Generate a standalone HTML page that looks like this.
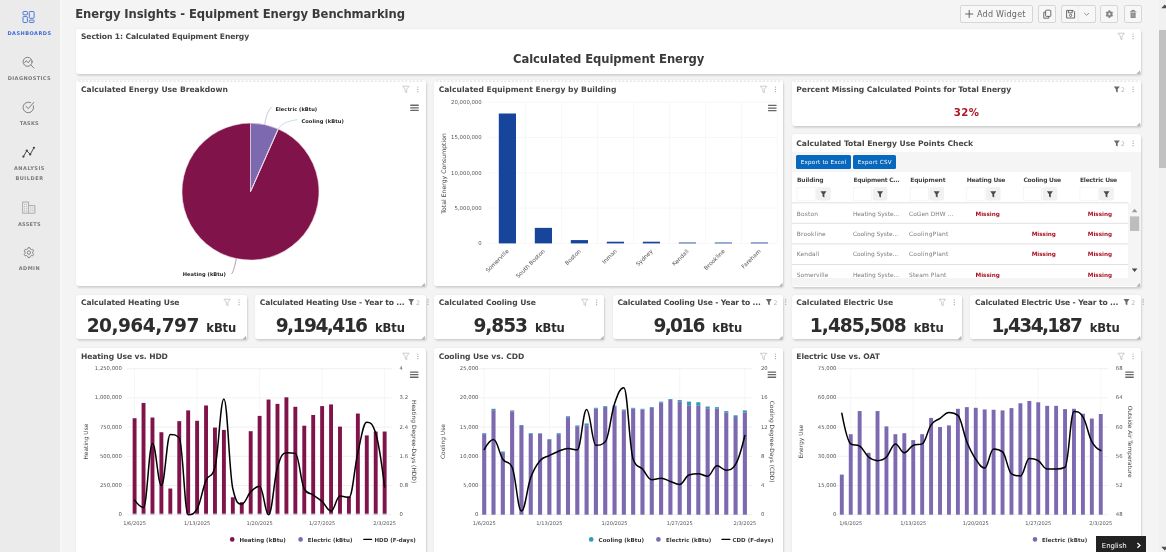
<!DOCTYPE html>
<html lang="en"><head><meta charset="utf-8"><title>Energy Insights - Equipment Energy Benchmarking</title>
<style>
html,body{margin:0;padding:0}
body{width:1166px;height:552px;overflow:hidden;position:relative;background:#f4f4f4;font-family:"DejaVu Sans","Liberation Sans",sans-serif;}
.t{position:absolute;white-space:nowrap;display:block}
.a,div{position:absolute;box-sizing:border-box}
.card{background:#fff;border-radius:3px;box-shadow:1px 2px 2px rgba(0,0,0,.13),0 0 2.5px rgba(0,0,0,.07)}
.btn{border:1px solid #d6d6d6;border-radius:2px;background:#f7f7f7}
svg{overflow:visible}
#root{left:0;top:0;width:1166px;height:552px;will-change:transform;filter:blur(.3px)}
</style></head><body><div id="root">
<div class="" style="left:0.00px;top:0.00px;width:60.00px;height:552.00px;background:#ebebeb;"></div>
<div class="" style="left:60.00px;top:0.00px;width:2.00px;height:552.00px;background:#f7f7f7;"></div>
<div class="" style="left:1158.60px;top:0.00px;width:7.40px;height:552.00px;background:#f1f1f1;"></div>
<div class="" style="left:1158.60px;top:30.00px;width:7.40px;height:138.00px;background:#c1c1c1;"></div>
<svg class="a" style="left:0px;top:0px" width="1166" height="552" viewBox="0 0 1166 552">
<path d="M1161.2 8.2L1164.8 4.4L1168.4 8.2Z" fill="#505050"/>
<path d="M1161.2 546.8L1164.8 550.4L1168.4 546.8Z" fill="#505050"/>
</svg>
<span class="t" style="left:7.40px;top:31.00px;font-size:5.0px;line-height:5.0px;color:#3b6bd6;font-weight:700;letter-spacing:0.488px;">DASHBOARDS</span>
<span class="t" style="left:7.75px;top:76.00px;font-size:5.0px;line-height:5.0px;color:#7a7a7a;font-weight:700;letter-spacing:0.424px;">DIAGNOSTICS</span>
<span class="t" style="left:19.70px;top:121.00px;font-size:5.0px;line-height:5.0px;color:#7a7a7a;font-weight:700;letter-spacing:0.258px;">TASKS</span>
<span class="t" style="left:14.00px;top:166.00px;font-size:5.0px;line-height:5.0px;color:#7a7a7a;font-weight:700;letter-spacing:0.484px;">ANALYSIS</span>
<span class="t" style="left:15.40px;top:176.00px;font-size:5.0px;line-height:5.0px;color:#7a7a7a;font-weight:700;letter-spacing:0.544px;">BUILDER</span>
<span class="t" style="left:17.90px;top:222.00px;font-size:5.0px;line-height:5.0px;color:#7a7a7a;font-weight:700;letter-spacing:0.265px;">ASSETS</span>
<span class="t" style="left:18.80px;top:266.00px;font-size:5.0px;line-height:5.0px;color:#7a7a7a;font-weight:700;letter-spacing:0.440px;">ADMIN</span>
<svg class="a" style="left:0px;top:0px" width="60" height="300" viewBox="0 0 60 300">
<g fill="none" stroke="#4673d6" stroke-width="0.95"><rect x="23.0" y="11.5" width="4.4" height="3.3" rx="0.8"/><rect x="29.3" y="11.5" width="4.8" height="6.8" rx="0.8"/><rect x="23.0" y="16.6" width="4.4" height="5.9" rx="0.8"/><rect x="29.3" y="20.1" width="4.8" height="2.4" rx="0.8"/></g>
<g fill="none" stroke="#7a7a7a" stroke-width="0.95" stroke-linecap="round" stroke-linejoin="round"><circle cx="27.6" cy="61.8" r="4.5"/><path d="M31.0 65.2L34.0 68.0"/><path d="M24.6 62.6L26.4 60.6L28.2 62.8L30.4 60.0"/></g>
<g fill="none" stroke="#7a7a7a" stroke-width="0.95" stroke-linecap="round" stroke-linejoin="round"><path d="M33.4 105.8A5.3 5.3 0 1 1 30.6 102.6"/><path d="M26.0 106.4L28.3 108.6L33.8 102.4"/></g>
<g fill="none" stroke="#444" stroke-width="0.95" stroke-linecap="round" stroke-linejoin="round"><path d="M23.4 156.6L26.8 150.6L30.2 154.4L33.9 147.8"/></g><g fill="#444"><circle cx="23.4" cy="156.6" r="1.15"/><circle cx="26.8" cy="150.6" r="1.15"/><circle cx="30.2" cy="154.4" r="1.15"/><circle cx="33.9" cy="147.8" r="1.15"/></g>
<g fill="none" stroke="#9a9a9a" stroke-width="0.8" stroke-linejoin="round"><path d="M22.6 213.2V202.0H28.6V213.2Z"/><path d="M28.6 205.6H34.9V213.2H28.6"/><path d="M24.2 204.4h0.9M26.2 204.4h0.9M24.2 206.6h0.9M26.2 206.6h0.9M24.2 208.8h0.9M26.2 208.8h0.9M24.2 211h0.9M26.2 211h0.9M30.4 208h0.9M32.4 208h0.9M30.4 210.4h0.9M32.4 210.4h0.9"/></g>
<path d="M28.01 247.68L29.79 247.68L30.22 248.93L31.42 249.62L32.72 249.37L33.60 250.91L32.74 251.91L32.74 253.29L33.60 254.29L32.72 255.83L31.42 255.58L30.22 256.27L29.79 257.52L28.01 257.52L27.58 256.27L26.38 255.58L25.08 255.83L24.20 254.29L25.06 253.29L25.06 251.91L24.20 250.91L25.08 249.37L26.38 249.62L27.58 248.93Z" fill="none" stroke="#7a7a7a" stroke-width="0.9" stroke-linejoin="round"/>
<circle cx="28.9" cy="252.6" r="1.7" fill="none" stroke="#7a7a7a" stroke-width="0.9"/>
</svg>
<span class="t" style="left:75.20px;top:9.00px;font-size:11.6px;line-height:11.6px;color:#3a3a3a;font-weight:700;letter-spacing:-0.071px;">Energy Insights - Equipment Energy Benchmarking</span>
<div class="btn" style="left:960.00px;top:5.00px;width:72.60px;height:18.00px;"></div>
<div class="btn" style="left:1038.30px;top:5.00px;width:17.70px;height:18.00px;"></div>
<div class="btn" style="left:1061.00px;top:5.00px;width:34.50px;height:18.00px;"></div>
<div class="btn" style="left:1100.20px;top:5.00px;width:18.20px;height:18.00px;"></div>
<div class="btn" style="left:1124.00px;top:5.00px;width:17.60px;height:18.00px;"></div>
<span class="t" style="left:977.00px;top:11.00px;font-size:8.0px;line-height:8.0px;color:#666;letter-spacing:0.255px;">Add Widget</span>
<svg class="a" style="left:950px;top:0px" width="200" height="28" viewBox="950 0 200 28">
<path d="M965.2 14H973.2M969.2 10V18" stroke="#555" stroke-width="0.9" fill="none"/>
<g fill="none" stroke="#555" stroke-width="0.85" stroke-linejoin="round"><rect x="1045.6" y="10.2" width="5.2" height="6.2" rx="0.7"/><path d="M1045.6 12.2H1043.8V18.2H1048.8V16.4"/></g>
<g fill="none" stroke="#555" stroke-width="0.85" stroke-linejoin="round"><path d="M1066.6 10.4H1073.0L1074.6 12.0V18.0H1066.6Z"/><path d="M1068.4 10.4V12.8H1072.2V10.4"/><circle cx="1070.6" cy="15.4" r="1.1"/></g>
<path d="M1084.2 13.1L1086.6 15.2L1089.0 13.1" fill="none" stroke="#8a8a8a" stroke-width="0.9"/>
<path d="M1078.2 6.5V21.5" stroke="#e6e6e6" stroke-width="0.6"/>
<path d="M1108.76 10.56L1110.04 10.56L1110.35 11.47L1111.21 11.96L1112.15 11.78L1112.79 12.88L1112.16 13.60L1112.16 14.60L1112.79 15.32L1112.15 16.42L1111.21 16.24L1110.35 16.73L1110.04 17.64L1108.76 17.64L1108.45 16.73L1107.59 16.24L1106.65 16.42L1106.01 15.32L1106.64 14.60L1106.64 13.60L1106.01 12.88L1106.65 11.78L1107.59 11.96L1108.45 11.47Z" fill="#858585" stroke="#777" stroke-width="0.4" stroke-linejoin="round"/>
<circle cx="1109.4" cy="14.1" r="1.35" fill="#f7f7f7" stroke="#777" stroke-width="0.4"/>
<g stroke="#6d6d6d" stroke-width="0.8" fill="none"><path d="M1129.9 11.8H1136.3"/><path d="M1131.8 11.6V10.4H1134.4V11.6"/></g><rect x="1130.6" y="12.7" width="5.0" height="5.3" rx="0.5" fill="#858585"/><path d="M1132.3 13.4V17.3M1133.9 13.4V17.3" stroke="#c8c8c8" stroke-width="0.5"/>
</svg>
<div class="card" style="left:76.30px;top:28.50px;width:1064.50px;height:45.40px;"></div>
<span class="t" style="left:81.00px;top:33.00px;font-size:7.6px;line-height:7.6px;color:#454545;font-weight:700;letter-spacing:-0.106px;">Section 1: Calculated Equipment Energy</span>
<svg class="a" style="left:0px;top:0px" width="1166" height="552" viewBox="0 0 1166 552">
<path d="M1118.00 33.20H1124.40L1122.00 36.20V39.70L1120.40 38.80V36.20Z" fill="none" stroke="#b9b9b9" stroke-width="0.7" stroke-linejoin="round"/>
<circle cx="1133.10" cy="34.10" r="0.65" fill="#a8a8a8"/>
<circle cx="1133.10" cy="36.40" r="0.65" fill="#a8a8a8"/>
<circle cx="1133.10" cy="38.70" r="0.65" fill="#a8a8a8"/>
<path d="M1140.10 70.20V74.00H1136.50Z" fill="#b4b4b4"/>
</svg>
<span class="t" style="left:512.95px;top:54.00px;font-size:11.6px;line-height:11.6px;color:#3a3a3a;font-weight:700;letter-spacing:-0.066px;">Calculated Equipment Energy</span>
<div class="card" style="left:76.30px;top:80.30px;width:349.23px;height:206.20px;"></div>
<span class="t" style="left:81.00px;top:86.00px;font-size:7.6px;line-height:7.6px;color:#454545;font-weight:700;letter-spacing:0.005px;">Calculated Energy Use Breakdown</span>
<svg class="a" style="left:0px;top:0px" width="1166" height="552" viewBox="0 0 1166 552">
<path d="M78.30 81.10H423.53" stroke="#cfcfcf" stroke-width="0.8" stroke-dasharray="2.2 1.6"/>
<path d="M402.73 86.20H409.13L406.73 89.20V92.70L405.13 91.80V89.20Z" fill="none" stroke="#b9b9b9" stroke-width="0.7" stroke-linejoin="round"/>
<circle cx="417.83" cy="87.10" r="0.65" fill="#a8a8a8"/>
<circle cx="417.83" cy="89.40" r="0.65" fill="#a8a8a8"/>
<circle cx="417.83" cy="91.70" r="0.65" fill="#a8a8a8"/>
<path d="M424.83 282.80V286.60H421.23Z" fill="#b4b4b4"/>
</svg>
<svg class="a" style="left:0px;top:0px" width="1166" height="552" viewBox="0 0 1166 552">
<rect x="410.20" y="104.60" width="8.6" height="1.3" rx="0.5" fill="#666"/>
<rect x="410.20" y="107.20" width="8.6" height="1.3" rx="0.5" fill="#666"/>
<rect x="410.20" y="109.80" width="8.6" height="1.3" rx="0.5" fill="#666"/>
<path d="M250.5 191.6L278.33 129.01A68.5 68.5 0 1 1 250.50 123.10Z" fill="#80134a" stroke="#f3dde8" stroke-width="0.6" stroke-linejoin="round"/>
<path d="M250.5 191.6L250.50 123.10A68.5 68.5 0 0 1 278.15 128.93Z" fill="#7c69b0" stroke="#f3dde8" stroke-width="0.6" stroke-linejoin="round"/>
<path d="M250.5 191.6L278.15 128.93A68.5 68.5 0 0 1 278.33 129.01Z" fill="#2f9db5" stroke="#f3dde8" stroke-width="0.6" stroke-linejoin="round"/>
<path d="M264.63 124.57C266.23 116.57 267.23 111.57 271.6 107.0" fill="none" stroke="#a99fd0" stroke-width="0.6"/>
<path d="M278.24 128.97C281.24 123.97 286.24 121.37 297.6 119.6" fill="none" stroke="#9fc9d6" stroke-width="0.6"/>
<path d="M236.26 258.60C234.76 266.60 233.26 272.60 231.2 274.2" fill="none" stroke="#98557a" stroke-width="0.6"/>
</svg>
<span class="t" style="left:275.60px;top:107.00px;font-size:5.1px;line-height:5.1px;color:#222;font-weight:700;letter-spacing:0.027px;">Electric (kBtu)</span>
<span class="t" style="left:301.40px;top:119.00px;font-size:5.1px;line-height:5.1px;color:#222;font-weight:700;letter-spacing:0.084px;">Cooling (kBtu)</span>
<span class="t" style="left:182.80px;top:272.00px;font-size:5.1px;line-height:5.1px;color:#222;font-weight:700;letter-spacing:0.044px;">Heating (kBtu)</span>
<div class="card" style="left:433.93px;top:80.30px;width:349.23px;height:206.20px;"></div>
<span class="t" style="left:438.63px;top:86.00px;font-size:7.6px;line-height:7.6px;color:#454545;font-weight:700;letter-spacing:0.011px;">Calculated Equipment Energy by Building</span>
<svg class="a" style="left:0px;top:0px" width="1166" height="552" viewBox="0 0 1166 552">
<path d="M435.93 81.10H781.17" stroke="#cfcfcf" stroke-width="0.8" stroke-dasharray="2.2 1.6"/>
<path d="M760.37 86.20H766.77L764.37 89.20V92.70L762.77 91.80V89.20Z" fill="none" stroke="#b9b9b9" stroke-width="0.7" stroke-linejoin="round"/>
<circle cx="775.47" cy="87.10" r="0.65" fill="#a8a8a8"/>
<circle cx="775.47" cy="89.40" r="0.65" fill="#a8a8a8"/>
<circle cx="775.47" cy="91.70" r="0.65" fill="#a8a8a8"/>
<path d="M782.47 282.80V286.60H778.87Z" fill="#b4b4b4"/>
</svg>
<svg class="a" style="left:0px;top:0px" width="1166" height="552" viewBox="0 0 1166 552">
<rect x="768.00" y="104.80" width="8.6" height="1.3" rx="0.5" fill="#666"/>
<rect x="768.00" y="107.40" width="8.6" height="1.3" rx="0.5" fill="#666"/>
<rect x="768.00" y="110.00" width="8.6" height="1.3" rx="0.5" fill="#666"/>
<path d="M489.4 102.20H777.4" stroke="#f1f1f1" stroke-width="0.6"/>
<path d="M489.4 137.50H777.4" stroke="#f1f1f1" stroke-width="0.6"/>
<path d="M489.4 172.80H777.4" stroke="#f1f1f1" stroke-width="0.6"/>
<path d="M489.4 208.10H777.4" stroke="#f1f1f1" stroke-width="0.6"/>
<path d="M489.4 243.40H777.4" stroke="#f1f1f1" stroke-width="0.6"/>
<path d="M525.40 102.2V243.4" stroke="#f1f1f1" stroke-width="0.6"/>
<path d="M561.40 102.2V243.4" stroke="#f1f1f1" stroke-width="0.6"/>
<path d="M597.40 102.2V243.4" stroke="#f1f1f1" stroke-width="0.6"/>
<path d="M633.40 102.2V243.4" stroke="#f1f1f1" stroke-width="0.6"/>
<path d="M669.40 102.2V243.4" stroke="#f1f1f1" stroke-width="0.6"/>
<path d="M705.40 102.2V243.4" stroke="#f1f1f1" stroke-width="0.6"/>
<path d="M741.40 102.2V243.4" stroke="#f1f1f1" stroke-width="0.6"/>
<path d="M777.40 102.2V243.4" stroke="#f1f1f1" stroke-width="0.6"/>
<rect x="498.80" y="113.50" width="17.2" height="129.90" fill="#17459b"/>
<rect x="534.80" y="227.87" width="17.2" height="15.53" fill="#17459b"/>
<rect x="570.80" y="240.08" width="17.2" height="3.32" fill="#17459b"/>
<rect x="606.80" y="241.71" width="17.2" height="1.69" fill="#17459b"/>
<rect x="642.80" y="241.71" width="17.2" height="1.69" fill="#17459b"/>
<rect x="678.80" y="242.55" width="17.2" height="0.85" fill="#17459b"/>
<rect x="714.80" y="242.55" width="17.2" height="0.85" fill="#17459b"/>
<rect x="750.80" y="242.55" width="17.2" height="0.85" fill="#17459b"/>
<text x="481.70" y="104.10" font-size="5.35" text-anchor="end" fill="#555">20,000,000</text>
<text x="481.70" y="139.40" font-size="5.35" text-anchor="end" fill="#555">15,000,000</text>
<text x="481.70" y="174.70" font-size="5.35" text-anchor="end" fill="#555">10,000,000</text>
<text x="481.70" y="210.00" font-size="5.35" text-anchor="end" fill="#555">5,000,000</text>
<text x="481.70" y="245.30" font-size="5.35" text-anchor="end" fill="#555">0</text>
<text x="509.20" y="251.60" font-size="5.7" text-anchor="end" transform="rotate(-45 509.20 251.60)" fill="#555">Somerville</text>
<text x="545.20" y="251.60" font-size="5.7" text-anchor="end" transform="rotate(-45 545.20 251.60)" fill="#555">South Boston</text>
<text x="581.20" y="251.60" font-size="5.7" text-anchor="end" transform="rotate(-45 581.20 251.60)" fill="#555">Boston</text>
<text x="617.20" y="251.60" font-size="5.7" text-anchor="end" transform="rotate(-45 617.20 251.60)" fill="#555">Inman</text>
<text x="653.20" y="251.60" font-size="5.7" text-anchor="end" transform="rotate(-45 653.20 251.60)" fill="#555">Sydney</text>
<text x="689.20" y="251.60" font-size="5.7" text-anchor="end" transform="rotate(-45 689.20 251.60)" fill="#555">Kendall</text>
<text x="725.20" y="251.60" font-size="5.7" text-anchor="end" transform="rotate(-45 725.20 251.60)" fill="#555">Brookline</text>
<text x="761.20" y="251.60" font-size="5.7" text-anchor="end" transform="rotate(-45 761.20 251.60)" fill="#555">Fareham</text>
<text x="445.60" y="173.40" font-size="6.1" text-anchor="middle" transform="rotate(-90 445.60 173.40)" textLength="80.60" lengthAdjust="spacing" fill="#444">Total Energy Consumption</text>
</svg>
<div class="card" style="left:791.57px;top:80.30px;width:349.23px;height:45.90px;"></div>
<span class="t" style="left:796.27px;top:86.00px;font-size:7.6px;line-height:7.6px;color:#454545;font-weight:700;letter-spacing:-0.037px;">Percent Missing Calculated Points for Total Energy</span>
<svg class="a" style="left:0px;top:0px" width="1166" height="552" viewBox="0 0 1166 552">
<path d="M793.57 81.10H1138.80" stroke="#cfcfcf" stroke-width="0.8" stroke-dasharray="2.2 1.6"/>
<path d="M1113.80 86.40H1119.80L1117.70 89.30V92.60L1115.90 91.60V89.30Z" fill="#6a6a6a"/>
<circle cx="1133.10" cy="87.10" r="0.65" fill="#a8a8a8"/>
<circle cx="1133.10" cy="89.40" r="0.65" fill="#a8a8a8"/>
<circle cx="1133.10" cy="91.70" r="0.65" fill="#a8a8a8"/>
<path d="M1140.10 122.50V126.30H1136.50Z" fill="#b4b4b4"/>
</svg>
<span class="t" style="left:1121.00px;top:87.00px;font-size:6.2px;line-height:6.2px;color:#b4b4b4;">2</span>
<span class="t" style="left:953.80px;top:108.00px;font-size:10.2px;line-height:10.2px;color:#b01524;font-weight:700;letter-spacing:0.393px;">32%</span>
<div class="card" style="left:791.57px;top:134.00px;width:349.23px;height:152.50px;"></div>
<span class="t" style="left:796.27px;top:140.00px;font-size:7.6px;line-height:7.6px;color:#454545;font-weight:700;letter-spacing:-0.015px;">Calculated Total Energy Use Points Check</span>
<svg class="a" style="left:0px;top:0px" width="1166" height="552" viewBox="0 0 1166 552">
<path d="M1113.80 140.40H1119.80L1117.70 143.30V146.60L1115.90 145.60V143.30Z" fill="#6a6a6a"/>
<circle cx="1133.10" cy="141.10" r="0.65" fill="#a8a8a8"/>
<circle cx="1133.10" cy="143.40" r="0.65" fill="#a8a8a8"/>
<circle cx="1133.10" cy="145.70" r="0.65" fill="#a8a8a8"/>
<path d="M1140.10 282.80V286.60H1136.50Z" fill="#b4b4b4"/>
</svg>
<span class="t" style="left:1121.00px;top:141.00px;font-size:6.2px;line-height:6.2px;color:#b4b4b4;">2</span>
<div class="" style="left:791.57px;top:151.70px;width:349.23px;height:134.20px;background:#f5f5f5;border-radius:0 0 3px 3px;"></div>
<svg class="a" style="left:0px;top:0px" width="1166" height="552" viewBox="0 0 1166 552">
<path d="M1140.10 282.80V286.60H1136.50Z" fill="#b4b4b4"/>
</svg>
<div class="" style="left:796.00px;top:155.20px;width:54.70px;height:13.60px;background:#0768be;border-radius:1.5px;"></div>
<div class="" style="left:853.00px;top:155.20px;width:43.40px;height:13.60px;background:#0768be;border-radius:1.5px;"></div>
<span class="t" style="left:800.75px;top:160.00px;font-size:5.6px;line-height:5.6px;color:#fff;letter-spacing:0.225px;">Export to Excel</span>
<span class="t" style="left:857.70px;top:160.00px;font-size:5.6px;line-height:5.6px;color:#fff;letter-spacing:0.288px;">Export CSV</span>
<div class="" style="left:791.57px;top:172.00px;width:339.63px;height:30.80px;background:#fff;"></div>
<div class="" style="left:791.57px;top:202.80px;width:336.73px;height:75.70px;background:#fff;"></div>
<span class="t" style="left:796.97px;top:177.00px;font-size:6.0px;line-height:6.0px;color:#444;font-weight:700;letter-spacing:-0.182px;">Building</span>
<span class="t" style="left:853.57px;top:177.00px;font-size:6.0px;line-height:6.0px;color:#444;font-weight:700;letter-spacing:-0.293px;">Equipment C...</span>
<span class="t" style="left:910.18px;top:177.00px;font-size:6.0px;line-height:6.0px;color:#444;font-weight:700;letter-spacing:-0.135px;">Equipment</span>
<span class="t" style="left:966.78px;top:177.00px;font-size:6.0px;line-height:6.0px;color:#444;font-weight:700;letter-spacing:-0.263px;">Heating Use</span>
<span class="t" style="left:1023.39px;top:177.00px;font-size:6.0px;line-height:6.0px;color:#444;font-weight:700;letter-spacing:-0.213px;">Cooling Use</span>
<span class="t" style="left:1079.99px;top:177.00px;font-size:6.0px;line-height:6.0px;color:#444;font-weight:700;letter-spacing:-0.239px;">Electric Use</span>
<svg class="a" style="left:0px;top:0px" width="1166" height="552" viewBox="0 0 1166 552">
<rect x="796.97" y="187.4" width="18.2" height="12.8" fill="#fff" stroke="#efefef" stroke-width="0.6"/>
<rect x="816.57" y="187.4" width="13.8" height="12.8" rx="1.5" fill="#f1f1f1" stroke="#ebebeb" stroke-width="0.5"/>
<path d="M820.47 191.30H826.47L824.37 194.20V197.50L822.57 196.50V194.20Z" fill="#4a4a4a"/>
<rect x="853.57" y="187.4" width="18.2" height="12.8" fill="#fff" stroke="#efefef" stroke-width="0.6"/>
<rect x="873.17" y="187.4" width="13.8" height="12.8" rx="1.5" fill="#f1f1f1" stroke="#ebebeb" stroke-width="0.5"/>
<path d="M877.07 191.30H883.07L880.97 194.20V197.50L879.17 196.50V194.20Z" fill="#4a4a4a"/>
<rect x="910.18" y="187.4" width="18.2" height="12.8" fill="#fff" stroke="#efefef" stroke-width="0.6"/>
<rect x="929.78" y="187.4" width="13.8" height="12.8" rx="1.5" fill="#f1f1f1" stroke="#ebebeb" stroke-width="0.5"/>
<path d="M933.68 191.30H939.68L937.58 194.20V197.50L935.78 196.50V194.20Z" fill="#4a4a4a"/>
<rect x="966.78" y="187.4" width="18.2" height="12.8" fill="#fff" stroke="#efefef" stroke-width="0.6"/>
<rect x="986.38" y="187.4" width="13.8" height="12.8" rx="1.5" fill="#f1f1f1" stroke="#ebebeb" stroke-width="0.5"/>
<path d="M990.28 191.30H996.28L994.18 194.20V197.50L992.38 196.50V194.20Z" fill="#4a4a4a"/>
<rect x="1023.39" y="187.4" width="18.2" height="12.8" fill="#fff" stroke="#efefef" stroke-width="0.6"/>
<rect x="1042.99" y="187.4" width="13.8" height="12.8" rx="1.5" fill="#f1f1f1" stroke="#ebebeb" stroke-width="0.5"/>
<path d="M1046.89 191.30H1052.89L1050.79 194.20V197.50L1048.99 196.50V194.20Z" fill="#4a4a4a"/>
<rect x="1079.99" y="187.4" width="18.2" height="12.8" fill="#fff" stroke="#efefef" stroke-width="0.6"/>
<rect x="1099.59" y="187.4" width="13.8" height="12.8" rx="1.5" fill="#f1f1f1" stroke="#ebebeb" stroke-width="0.5"/>
<path d="M1103.49 191.30H1109.49L1107.39 194.20V197.50L1105.59 196.50V194.20Z" fill="#4a4a4a"/>
<path d="M791.57 202.8H1128.3" stroke="#dedede" stroke-width="0.9"/>
<path d="M791.57 223.3H1128.3" stroke="#dedede" stroke-width="0.9"/>
<path d="M791.57 243.9H1128.3" stroke="#dedede" stroke-width="0.9"/>
<path d="M791.57 264.5H1128.3" stroke="#dedede" stroke-width="0.9"/>
<path d="M1131.8 212.2L1134.6 208.8L1137.4 212.2Z" fill="#9b9b9b"/>
<rect x="1130.0" y="216.4" width="9.2" height="14.6" fill="#bdbdbd"/>
<path d="M1131.8 268.6L1134.6 272.0L1137.4 268.6Z" fill="#444"/>
</svg>
<span class="t" style="left:796.77px;top:212.00px;font-size:5.9px;line-height:5.9px;color:#7c7c7c;letter-spacing:0.161px;">Boston</span>
<span class="t" style="left:852.89px;top:212.00px;font-size:5.9px;line-height:5.9px;color:#7c7c7c;letter-spacing:-0.045px;">Heating Syste...</span>
<span class="t" style="left:909.01px;top:212.00px;font-size:5.9px;line-height:5.9px;color:#7c7c7c;letter-spacing:0.045px;">CoGen DHW ...</span>
<span class="t" style="left:975.59px;top:212.00px;font-size:5.7px;line-height:5.7px;color:#a81423;font-weight:700;letter-spacing:-0.051px;">Missing</span>
<span class="t" style="left:1087.84px;top:212.00px;font-size:5.7px;line-height:5.7px;color:#a81423;font-weight:700;letter-spacing:-0.051px;">Missing</span>
<span class="t" style="left:796.77px;top:232.00px;font-size:5.9px;line-height:5.9px;color:#7c7c7c;letter-spacing:0.172px;">Brookline</span>
<span class="t" style="left:852.89px;top:232.00px;font-size:5.9px;line-height:5.9px;color:#7c7c7c;letter-spacing:-0.031px;">Cooling Syste...</span>
<span class="t" style="left:909.01px;top:232.00px;font-size:5.9px;line-height:5.9px;color:#7c7c7c;letter-spacing:0.221px;">CoolingPlant</span>
<span class="t" style="left:1031.72px;top:232.00px;font-size:5.7px;line-height:5.7px;color:#a81423;font-weight:700;letter-spacing:-0.051px;">Missing</span>
<span class="t" style="left:1087.84px;top:232.00px;font-size:5.7px;line-height:5.7px;color:#a81423;font-weight:700;letter-spacing:-0.051px;">Missing</span>
<span class="t" style="left:796.77px;top:252.00px;font-size:5.9px;line-height:5.9px;color:#7c7c7c;letter-spacing:0.169px;">Kendall</span>
<span class="t" style="left:852.89px;top:252.00px;font-size:5.9px;line-height:5.9px;color:#7c7c7c;letter-spacing:-0.031px;">Cooling Syste...</span>
<span class="t" style="left:909.01px;top:252.00px;font-size:5.9px;line-height:5.9px;color:#7c7c7c;letter-spacing:0.221px;">CoolingPlant</span>
<span class="t" style="left:1031.72px;top:252.00px;font-size:5.7px;line-height:5.7px;color:#a81423;font-weight:700;letter-spacing:-0.051px;">Missing</span>
<span class="t" style="left:1087.84px;top:252.00px;font-size:5.7px;line-height:5.7px;color:#a81423;font-weight:700;letter-spacing:-0.051px;">Missing</span>
<span class="t" style="left:796.77px;top:273.00px;font-size:5.9px;line-height:5.9px;color:#7c7c7c;letter-spacing:0.045px;">Somerville</span>
<span class="t" style="left:852.89px;top:273.00px;font-size:5.9px;line-height:5.9px;color:#7c7c7c;letter-spacing:-0.045px;">Heating Syste...</span>
<span class="t" style="left:909.01px;top:273.00px;font-size:5.9px;line-height:5.9px;color:#7c7c7c;letter-spacing:0.161px;">Steam Plant</span>
<span class="t" style="left:975.59px;top:273.00px;font-size:5.7px;line-height:5.7px;color:#a81423;font-weight:700;letter-spacing:-0.051px;">Missing</span>
<span class="t" style="left:1087.84px;top:273.00px;font-size:5.7px;line-height:5.7px;color:#a81423;font-weight:700;letter-spacing:-0.051px;">Missing</span>
<div class="card" style="left:76.30px;top:295.10px;width:170.42px;height:44.40px;"></div>
<span class="t" style="left:81.00px;top:299.00px;font-size:7.6px;line-height:7.6px;color:#454545;font-weight:700;letter-spacing:-0.070px;">Calculated Heating Use</span>
<svg class="a" style="left:0px;top:0px" width="1166" height="552" viewBox="0 0 1166 552">
<path d="M223.92 299.20H230.32L227.92 302.20V305.70L226.32 304.80V302.20Z" fill="none" stroke="#b9b9b9" stroke-width="0.7" stroke-linejoin="round"/>
<circle cx="239.02" cy="300.10" r="0.65" fill="#a8a8a8"/>
<circle cx="239.02" cy="302.40" r="0.65" fill="#a8a8a8"/>
<circle cx="239.02" cy="304.70" r="0.65" fill="#a8a8a8"/>
<path d="M246.02 335.80V339.60H242.42Z" fill="#b4b4b4"/>
</svg>
<span class="t" style="left:86.71px;top:317.00px;font-size:18.6px;line-height:18.6px;color:#2d2d2d;font-weight:700;letter-spacing:-0.552px;">20,964,797</span>
<span class="t" style="left:206.31px;top:323.00px;font-size:11.6px;line-height:11.6px;color:#2d2d2d;font-weight:700;letter-spacing:-0.120px;">kBtu</span>
<div class="card" style="left:255.12px;top:295.10px;width:170.42px;height:44.40px;"></div>
<span class="t" style="left:259.82px;top:299.00px;font-size:7.6px;line-height:7.6px;color:#454545;font-weight:700;letter-spacing:-0.147px;">Calculated Heating Use - Year to ...</span>
<svg class="a" style="left:0px;top:0px" width="1166" height="552" viewBox="0 0 1166 552">
<path d="M408.22 299.00H414.22L412.12 301.90V305.20L410.32 304.20V301.90Z" fill="#6a6a6a"/>
<circle cx="428.02" cy="299.70" r="0.65" fill="#a8a8a8"/>
<circle cx="428.02" cy="302.00" r="0.65" fill="#a8a8a8"/>
<circle cx="428.02" cy="304.30" r="0.65" fill="#a8a8a8"/>
<path d="M424.83 335.80V339.60H421.23Z" fill="#b4b4b4"/>
</svg>
<span class="t" style="left:415.92px;top:300.00px;font-size:6.2px;line-height:6.2px;color:#b4b4b4;">2</span>
<span class="t" style="left:275.73px;top:317.00px;font-size:18.6px;line-height:18.6px;color:#2d2d2d;font-weight:700;letter-spacing:-1.553px;">9,194,416</span>
<span class="t" style="left:374.93px;top:323.00px;font-size:11.6px;line-height:11.6px;color:#2d2d2d;font-weight:700;letter-spacing:-0.120px;">kBtu</span>
<div class="card" style="left:433.93px;top:295.10px;width:170.42px;height:44.40px;"></div>
<span class="t" style="left:438.63px;top:299.00px;font-size:7.6px;line-height:7.6px;color:#454545;font-weight:700;letter-spacing:-0.048px;">Calculated Cooling Use</span>
<svg class="a" style="left:0px;top:0px" width="1166" height="552" viewBox="0 0 1166 552">
<path d="M581.55 299.20H587.95L585.55 302.20V305.70L583.95 304.80V302.20Z" fill="none" stroke="#b9b9b9" stroke-width="0.7" stroke-linejoin="round"/>
<circle cx="596.65" cy="300.10" r="0.65" fill="#a8a8a8"/>
<circle cx="596.65" cy="302.40" r="0.65" fill="#a8a8a8"/>
<circle cx="596.65" cy="304.70" r="0.65" fill="#a8a8a8"/>
<path d="M603.65 335.80V339.60H600.05Z" fill="#b4b4b4"/>
</svg>
<span class="t" style="left:473.39px;top:317.00px;font-size:18.6px;line-height:18.6px;color:#2d2d2d;font-weight:700;letter-spacing:-1.058px;">9,853</span>
<span class="t" style="left:534.89px;top:323.00px;font-size:11.6px;line-height:11.6px;color:#2d2d2d;font-weight:700;letter-spacing:-0.120px;">kBtu</span>
<div class="card" style="left:612.75px;top:295.10px;width:170.42px;height:44.40px;"></div>
<span class="t" style="left:617.45px;top:299.00px;font-size:7.6px;line-height:7.6px;color:#454545;font-weight:700;letter-spacing:-0.140px;">Calculated Cooling Use - Year to ...</span>
<svg class="a" style="left:0px;top:0px" width="1166" height="552" viewBox="0 0 1166 552">
<path d="M765.85 299.00H771.85L769.75 301.90V305.20L767.95 304.20V301.90Z" fill="#6a6a6a"/>
<circle cx="785.65" cy="299.70" r="0.65" fill="#a8a8a8"/>
<circle cx="785.65" cy="302.00" r="0.65" fill="#a8a8a8"/>
<circle cx="785.65" cy="304.30" r="0.65" fill="#a8a8a8"/>
<path d="M782.47 335.80V339.60H778.87Z" fill="#b4b4b4"/>
</svg>
<span class="t" style="left:773.55px;top:300.00px;font-size:6.2px;line-height:6.2px;color:#b4b4b4;">2</span>
<span class="t" style="left:653.61px;top:317.00px;font-size:18.6px;line-height:18.6px;color:#2d2d2d;font-weight:700;letter-spacing:-1.758px;">9,016</span>
<span class="t" style="left:712.31px;top:323.00px;font-size:11.6px;line-height:11.6px;color:#2d2d2d;font-weight:700;letter-spacing:-0.120px;">kBtu</span>
<div class="card" style="left:791.57px;top:295.10px;width:170.42px;height:44.40px;"></div>
<span class="t" style="left:796.27px;top:299.00px;font-size:7.6px;line-height:7.6px;color:#454545;font-weight:700;letter-spacing:-0.058px;">Calculated Electric Use</span>
<svg class="a" style="left:0px;top:0px" width="1166" height="552" viewBox="0 0 1166 552">
<path d="M939.18 299.20H945.58L943.18 302.20V305.70L941.58 304.80V302.20Z" fill="none" stroke="#b9b9b9" stroke-width="0.7" stroke-linejoin="round"/>
<circle cx="954.28" cy="300.10" r="0.65" fill="#a8a8a8"/>
<circle cx="954.28" cy="302.40" r="0.65" fill="#a8a8a8"/>
<circle cx="954.28" cy="304.70" r="0.65" fill="#a8a8a8"/>
<path d="M961.28 335.80V339.60H957.68Z" fill="#b4b4b4"/>
</svg>
<span class="t" style="left:809.87px;top:317.00px;font-size:18.6px;line-height:18.6px;color:#2d2d2d;font-weight:700;letter-spacing:-0.978px;">1,485,508</span>
<span class="t" style="left:913.67px;top:323.00px;font-size:11.6px;line-height:11.6px;color:#2d2d2d;font-weight:700;letter-spacing:-0.120px;">kBtu</span>
<div class="card" style="left:970.38px;top:295.10px;width:170.42px;height:44.40px;"></div>
<span class="t" style="left:975.08px;top:299.00px;font-size:7.6px;line-height:7.6px;color:#454545;font-weight:700;letter-spacing:-0.138px;">Calculated Electric Use - Year to ...</span>
<svg class="a" style="left:0px;top:0px" width="1166" height="552" viewBox="0 0 1166 552">
<path d="M1123.48 299.00H1129.48L1127.38 301.90V305.20L1125.58 304.20V301.90Z" fill="#6a6a6a"/>
<circle cx="1143.28" cy="299.70" r="0.65" fill="#a8a8a8"/>
<circle cx="1143.28" cy="302.00" r="0.65" fill="#a8a8a8"/>
<circle cx="1143.28" cy="304.30" r="0.65" fill="#a8a8a8"/>
<path d="M1140.10 335.80V339.60H1136.50Z" fill="#b4b4b4"/>
</svg>
<span class="t" style="left:1131.18px;top:300.00px;font-size:6.2px;line-height:6.2px;color:#b4b4b4;">2</span>
<span class="t" style="left:991.39px;top:317.00px;font-size:18.6px;line-height:18.6px;color:#2d2d2d;font-weight:700;letter-spacing:-1.653px;">1,434,187</span>
<span class="t" style="left:1089.79px;top:323.00px;font-size:11.6px;line-height:11.6px;color:#2d2d2d;font-weight:700;letter-spacing:-0.120px;">kBtu</span>
<div class="card" style="left:76.30px;top:348.20px;width:349.23px;height:211.80px;"></div>
<span class="t" style="left:81.00px;top:353.00px;font-size:7.6px;line-height:7.6px;color:#454545;font-weight:700;letter-spacing:-0.104px;">Heating Use vs. HDD</span>
<svg class="a" style="left:0px;top:0px" width="1166" height="552" viewBox="0 0 1166 552">
<path d="M402.73 353.20H409.13L406.73 356.20V359.70L405.13 358.80V356.20Z" fill="none" stroke="#b9b9b9" stroke-width="0.7" stroke-linejoin="round"/>
<circle cx="417.83" cy="354.10" r="0.65" fill="#a8a8a8"/>
<circle cx="417.83" cy="356.40" r="0.65" fill="#a8a8a8"/>
<circle cx="417.83" cy="358.70" r="0.65" fill="#a8a8a8"/>
<path d="M424.83 556.30V560.10H421.23Z" fill="#b4b4b4"/>
</svg>
<svg class="a" style="left:0px;top:0px" width="1166" height="552" viewBox="0 0 1166 552">
<rect x="409.93" y="371.40" width="8.6" height="1.3" rx="0.5" fill="#666"/>
<rect x="409.93" y="374.00" width="8.6" height="1.3" rx="0.5" fill="#666"/>
<rect x="409.93" y="376.60" width="8.6" height="1.3" rx="0.5" fill="#666"/>
<path d="M127.13 368.70H392.11" stroke="#e6e6e6" stroke-width="0.6"/>
<text x="121.80" y="370.20" font-size="5.3" text-anchor="end" fill="#555">1,250,000</text>
<text x="399.60" y="370.20" font-size="5.3" fill="#555">4</text>
<path d="M127.13 397.90H392.11" stroke="#e6e6e6" stroke-width="0.6"/>
<text x="121.80" y="399.40" font-size="5.3" text-anchor="end" fill="#555">1,000,000</text>
<text x="399.60" y="399.40" font-size="5.3" fill="#555">3.2</text>
<path d="M127.13 427.10H392.11" stroke="#e6e6e6" stroke-width="0.6"/>
<text x="121.80" y="428.60" font-size="5.3" text-anchor="end" fill="#555">750,000</text>
<text x="399.60" y="428.60" font-size="5.3" fill="#555">2.4</text>
<path d="M127.13 456.30H392.11" stroke="#e6e6e6" stroke-width="0.6"/>
<text x="121.80" y="457.80" font-size="5.3" text-anchor="end" fill="#555">500,000</text>
<text x="399.60" y="457.80" font-size="5.3" fill="#555">1.6</text>
<path d="M127.13 485.50H392.11" stroke="#e6e6e6" stroke-width="0.6"/>
<text x="121.80" y="487.00" font-size="5.3" text-anchor="end" fill="#555">250,000</text>
<text x="399.60" y="487.00" font-size="5.3" fill="#555">0.8</text>
<path d="M127.13 514.70H392.11" stroke="#e6e6e6" stroke-width="0.6"/>
<text x="121.80" y="516.20" font-size="5.3" text-anchor="end" fill="#555">0</text>
<text x="399.60" y="516.20" font-size="5.3" fill="#555">0</text>
<path d="M134.60 368.7V514.7" stroke="#f0f0f0" stroke-width="0.6"/>
<text x="134.60" y="525.40" font-size="5.1" text-anchor="middle" fill="#555">1/6/2025</text>
<path d="M197.11 368.7V514.7" stroke="#f0f0f0" stroke-width="0.6"/>
<text x="197.11" y="525.40" font-size="5.1" text-anchor="middle" fill="#555">1/13/2025</text>
<path d="M259.62 368.7V514.7" stroke="#f0f0f0" stroke-width="0.6"/>
<text x="259.62" y="525.40" font-size="5.1" text-anchor="middle" fill="#555">1/20/2025</text>
<path d="M322.13 368.7V514.7" stroke="#f0f0f0" stroke-width="0.6"/>
<text x="322.13" y="525.40" font-size="5.1" text-anchor="middle" fill="#555">1/27/2025</text>
<path d="M384.64 368.7V514.7" stroke="#f0f0f0" stroke-width="0.6"/>
<text x="384.64" y="525.40" font-size="5.1" text-anchor="middle" fill="#555">2/3/2025</text>
<rect x="132.65" y="513.65" width="3.9" height="1.05" fill="#b7abd6"/>
<rect x="132.65" y="418.22" width="3.9" height="95.43" fill="#80134a"/>
<rect x="141.58" y="513.65" width="3.9" height="1.05" fill="#b7abd6"/>
<rect x="141.58" y="402.92" width="3.9" height="110.73" fill="#80134a"/>
<rect x="150.51" y="513.65" width="3.9" height="1.05" fill="#b7abd6"/>
<rect x="150.51" y="417.52" width="3.9" height="96.13" fill="#80134a"/>
<rect x="159.44" y="513.65" width="3.9" height="1.05" fill="#b7abd6"/>
<rect x="159.44" y="432.24" width="3.9" height="81.41" fill="#80134a"/>
<rect x="168.37" y="513.65" width="3.9" height="1.05" fill="#b7abd6"/>
<rect x="168.37" y="488.54" width="3.9" height="25.11" fill="#80134a"/>
<rect x="177.30" y="513.65" width="3.9" height="1.05" fill="#b7abd6"/>
<rect x="177.30" y="421.14" width="3.9" height="92.51" fill="#80134a"/>
<rect x="186.23" y="513.65" width="3.9" height="1.05" fill="#b7abd6"/>
<rect x="186.23" y="410.40" width="3.9" height="103.25" fill="#80134a"/>
<rect x="195.16" y="513.65" width="3.9" height="1.05" fill="#b7abd6"/>
<rect x="195.16" y="420.79" width="3.9" height="92.86" fill="#80134a"/>
<rect x="204.09" y="513.65" width="3.9" height="1.05" fill="#b7abd6"/>
<rect x="204.09" y="405.49" width="3.9" height="108.16" fill="#80134a"/>
<rect x="213.02" y="513.65" width="3.9" height="1.05" fill="#b7abd6"/>
<rect x="213.02" y="427.57" width="3.9" height="86.08" fill="#80134a"/>
<rect x="221.95" y="513.65" width="3.9" height="1.05" fill="#b7abd6"/>
<rect x="221.95" y="429.90" width="3.9" height="83.75" fill="#80134a"/>
<rect x="230.88" y="513.65" width="3.9" height="1.05" fill="#b7abd6"/>
<rect x="230.88" y="497.30" width="3.9" height="16.35" fill="#80134a"/>
<rect x="239.81" y="513.65" width="3.9" height="1.05" fill="#b7abd6"/>
<rect x="239.81" y="502.20" width="3.9" height="11.45" fill="#80134a"/>
<rect x="248.74" y="513.65" width="3.9" height="1.05" fill="#b7abd6"/>
<rect x="248.74" y="431.19" width="3.9" height="82.46" fill="#80134a"/>
<rect x="257.67" y="513.65" width="3.9" height="1.05" fill="#b7abd6"/>
<rect x="257.67" y="415.89" width="3.9" height="97.76" fill="#80134a"/>
<rect x="266.60" y="513.65" width="3.9" height="1.05" fill="#b7abd6"/>
<rect x="266.60" y="399.54" width="3.9" height="114.11" fill="#80134a"/>
<rect x="275.53" y="513.65" width="3.9" height="1.05" fill="#b7abd6"/>
<rect x="275.53" y="403.86" width="3.9" height="109.79" fill="#80134a"/>
<rect x="284.46" y="513.65" width="3.9" height="1.05" fill="#b7abd6"/>
<rect x="284.46" y="397.32" width="3.9" height="116.33" fill="#80134a"/>
<rect x="293.39" y="513.65" width="3.9" height="1.05" fill="#b7abd6"/>
<rect x="293.39" y="406.78" width="3.9" height="106.87" fill="#80134a"/>
<rect x="302.32" y="513.65" width="3.9" height="1.05" fill="#b7abd6"/>
<rect x="302.32" y="425.70" width="3.9" height="87.95" fill="#80134a"/>
<rect x="311.25" y="513.65" width="3.9" height="1.05" fill="#b7abd6"/>
<rect x="311.25" y="414.95" width="3.9" height="98.70" fill="#80134a"/>
<rect x="320.18" y="513.65" width="3.9" height="1.05" fill="#b7abd6"/>
<rect x="320.18" y="406.08" width="3.9" height="107.57" fill="#80134a"/>
<rect x="329.11" y="513.65" width="3.9" height="1.05" fill="#b7abd6"/>
<rect x="329.11" y="404.44" width="3.9" height="109.21" fill="#80134a"/>
<rect x="338.04" y="513.65" width="3.9" height="1.05" fill="#b7abd6"/>
<rect x="338.04" y="426.63" width="3.9" height="87.02" fill="#80134a"/>
<rect x="346.97" y="513.65" width="3.9" height="1.05" fill="#b7abd6"/>
<rect x="346.97" y="496.36" width="3.9" height="17.29" fill="#80134a"/>
<rect x="355.90" y="513.65" width="3.9" height="1.05" fill="#b7abd6"/>
<rect x="355.90" y="413.55" width="3.9" height="100.10" fill="#80134a"/>
<rect x="364.83" y="513.65" width="3.9" height="1.05" fill="#b7abd6"/>
<rect x="364.83" y="435.39" width="3.9" height="78.26" fill="#80134a"/>
<rect x="373.76" y="513.65" width="3.9" height="1.05" fill="#b7abd6"/>
<rect x="373.76" y="431.54" width="3.9" height="82.11" fill="#80134a"/>
<rect x="382.69" y="513.65" width="3.9" height="1.05" fill="#b7abd6"/>
<rect x="382.69" y="431.54" width="3.9" height="82.11" fill="#80134a"/>
<path d="M134.60 500.10C134.60 500.10 139.96 507.40 143.53 507.40C147.10 507.40 148.89 443.53 152.46 443.53C156.03 443.53 157.82 485.50 161.39 485.50C164.96 485.50 166.75 434.40 170.32 434.40C173.89 434.40 175.68 434.40 179.25 438.05C182.82 441.70 184.61 514.70 188.18 514.70C191.75 514.70 193.54 514.70 197.11 508.86C200.68 503.02 202.47 488.71 206.04 480.39C209.61 472.07 211.40 480.39 214.97 467.25C218.54 454.11 220.33 399.00 223.90 399.00C227.47 399.00 229.26 473.45 232.83 488.79C236.40 504.12 238.19 504.12 241.76 504.12C245.33 504.12 247.12 495.46 250.69 491.89C254.26 488.31 256.05 486.23 259.62 486.23C263.19 486.23 264.98 514.70 268.55 514.70C272.12 514.70 273.91 479.66 277.48 467.25C281.05 454.84 282.84 452.65 286.41 452.65C289.98 452.65 291.77 452.65 295.34 453.38C298.91 454.11 300.70 482.58 304.27 488.79C307.84 494.99 309.63 492.44 313.20 494.99C316.77 497.55 318.56 498.35 322.13 501.56C325.70 504.77 327.49 511.05 331.06 511.05C334.63 511.05 336.42 496.09 339.99 496.09C343.56 496.09 345.35 497.55 348.92 497.55C352.49 497.55 354.28 467.69 357.85 452.65C361.42 437.61 363.21 422.36 366.78 422.36C370.35 422.36 372.14 422.36 375.71 433.31C379.28 444.25 384.64 486.96 384.64 486.96" fill="none" stroke="#000" stroke-width="1.5" stroke-linejoin="round" stroke-linecap="round"/>
<text x="87.60" y="441.60" font-size="5.9" text-anchor="middle" transform="rotate(-90 87.60 441.60)" fill="#444">Heating Use</text>
<text x="411.80" y="441.60" font-size="5.9" text-anchor="middle" transform="rotate(90 411.80 441.60)" fill="#444">Heating Degree-Days (HDD)</text>
<circle cx="232.2" cy="539.4" r="2.3" fill="#80134a"/>
<circle cx="300.6" cy="539.4" r="2.3" fill="#7c69b0"/>
<path d="M363.8 539.4H371.6" stroke="#000" stroke-width="1.3" stroke-linecap="round"/>
</svg>
<span class="t" style="left:239.40px;top:538.00px;font-size:5.5px;line-height:5.5px;color:#333;font-weight:700;letter-spacing:0.050px;">Heating (kBtu)</span>
<span class="t" style="left:307.80px;top:538.00px;font-size:5.5px;line-height:5.5px;color:#333;font-weight:700;letter-spacing:0.010px;">Electric (kBtu)</span>
<span class="t" style="left:374.40px;top:538.00px;font-size:5.5px;line-height:5.5px;color:#333;font-weight:700;letter-spacing:0.047px;">HDD (F-days)</span>
<div class="card" style="left:433.93px;top:348.20px;width:349.23px;height:211.80px;"></div>
<span class="t" style="left:438.63px;top:353.00px;font-size:7.6px;line-height:7.6px;color:#454545;font-weight:700;letter-spacing:-0.041px;">Cooling Use vs. CDD</span>
<svg class="a" style="left:0px;top:0px" width="1166" height="552" viewBox="0 0 1166 552">
<path d="M760.37 353.20H766.77L764.37 356.20V359.70L762.77 358.80V356.20Z" fill="none" stroke="#b9b9b9" stroke-width="0.7" stroke-linejoin="round"/>
<circle cx="775.47" cy="354.10" r="0.65" fill="#a8a8a8"/>
<circle cx="775.47" cy="356.40" r="0.65" fill="#a8a8a8"/>
<circle cx="775.47" cy="358.70" r="0.65" fill="#a8a8a8"/>
<path d="M782.47 556.30V560.10H778.87Z" fill="#b4b4b4"/>
</svg>
<svg class="a" style="left:0px;top:0px" width="1166" height="552" viewBox="0 0 1166 552">
<rect x="767.57" y="371.40" width="8.6" height="1.3" rx="0.5" fill="#666"/>
<rect x="767.57" y="374.00" width="8.6" height="1.3" rx="0.5" fill="#666"/>
<rect x="767.57" y="376.60" width="8.6" height="1.3" rx="0.5" fill="#666"/>
<path d="M476.55 368.70H752.54" stroke="#e6e6e6" stroke-width="0.6"/>
<text x="478.40" y="370.20" font-size="5.3" text-anchor="end" fill="#555">25,000</text>
<text x="761.00" y="370.20" font-size="5.3" fill="#555">20</text>
<path d="M476.55 397.90H752.54" stroke="#e6e6e6" stroke-width="0.6"/>
<text x="478.40" y="399.40" font-size="5.3" text-anchor="end" fill="#555">20,000</text>
<text x="761.00" y="399.40" font-size="5.3" fill="#555">16</text>
<path d="M476.55 427.10H752.54" stroke="#e6e6e6" stroke-width="0.6"/>
<text x="478.40" y="428.60" font-size="5.3" text-anchor="end" fill="#555">15,000</text>
<text x="761.00" y="428.60" font-size="5.3" fill="#555">12</text>
<path d="M476.55 456.30H752.54" stroke="#e6e6e6" stroke-width="0.6"/>
<text x="478.40" y="457.80" font-size="5.3" text-anchor="end" fill="#555">10,000</text>
<text x="761.00" y="457.80" font-size="5.3" fill="#555">8</text>
<path d="M476.55 485.50H752.54" stroke="#e6e6e6" stroke-width="0.6"/>
<text x="478.40" y="487.00" font-size="5.3" text-anchor="end" fill="#555">5,000</text>
<text x="761.00" y="487.00" font-size="5.3" fill="#555">4</text>
<path d="M476.55 514.70H752.54" stroke="#e6e6e6" stroke-width="0.6"/>
<text x="478.40" y="516.20" font-size="5.3" text-anchor="end" fill="#555">0</text>
<text x="761.00" y="516.20" font-size="5.3" fill="#555">0</text>
<path d="M484.20 368.7V514.7" stroke="#f0f0f0" stroke-width="0.6"/>
<text x="484.20" y="525.40" font-size="5.1" text-anchor="middle" fill="#555">1/6/2025</text>
<path d="M549.37 368.7V514.7" stroke="#f0f0f0" stroke-width="0.6"/>
<text x="549.37" y="525.40" font-size="5.1" text-anchor="middle" fill="#555">1/13/2025</text>
<path d="M614.54 368.7V514.7" stroke="#f0f0f0" stroke-width="0.6"/>
<text x="614.54" y="525.40" font-size="5.1" text-anchor="middle" fill="#555">1/20/2025</text>
<path d="M679.71 368.7V514.7" stroke="#f0f0f0" stroke-width="0.6"/>
<text x="679.71" y="525.40" font-size="5.1" text-anchor="middle" fill="#555">1/27/2025</text>
<path d="M744.88 368.7V514.7" stroke="#f0f0f0" stroke-width="0.6"/>
<text x="744.88" y="525.40" font-size="5.1" text-anchor="middle" fill="#555">2/3/2025</text>
<rect x="482.15" y="434.11" width="4.1" height="80.59" fill="#7c69b0"/>
<rect x="482.15" y="433.23" width="4.1" height="0.88" fill="#2f9db5"/>
<rect x="491.46" y="410.13" width="4.1" height="104.57" fill="#7c69b0"/>
<rect x="491.46" y="408.79" width="4.1" height="1.34" fill="#2f9db5"/>
<rect x="500.77" y="452.18" width="4.1" height="62.52" fill="#7c69b0"/>
<rect x="500.77" y="451.48" width="4.1" height="0.70" fill="#2f9db5"/>
<rect x="510.08" y="411.29" width="4.1" height="103.41" fill="#7c69b0"/>
<rect x="510.08" y="410.42" width="4.1" height="0.88" fill="#2f9db5"/>
<rect x="519.39" y="425.96" width="4.1" height="88.74" fill="#7c69b0"/>
<rect x="519.39" y="425.08" width="4.1" height="0.88" fill="#2f9db5"/>
<rect x="528.70" y="433.99" width="4.1" height="80.71" fill="#7c69b0"/>
<rect x="528.70" y="433.23" width="4.1" height="0.76" fill="#2f9db5"/>
<rect x="538.01" y="433.47" width="4.1" height="81.23" fill="#7c69b0"/>
<rect x="538.01" y="433.23" width="4.1" height="0.23" fill="#2f9db5"/>
<rect x="547.32" y="439.85" width="4.1" height="74.85" fill="#7c69b0"/>
<rect x="547.32" y="439.10" width="4.1" height="0.76" fill="#2f9db5"/>
<rect x="556.63" y="434.11" width="4.1" height="80.59" fill="#7c69b0"/>
<rect x="556.63" y="433.23" width="4.1" height="0.88" fill="#2f9db5"/>
<rect x="565.94" y="417.15" width="4.1" height="97.55" fill="#7c69b0"/>
<rect x="565.94" y="416.28" width="4.1" height="0.88" fill="#2f9db5"/>
<rect x="575.25" y="426.28" width="4.1" height="88.42" fill="#7c69b0"/>
<rect x="575.25" y="425.41" width="4.1" height="0.88" fill="#2f9db5"/>
<rect x="584.56" y="425.20" width="4.1" height="89.50" fill="#7c69b0"/>
<rect x="584.56" y="423.45" width="4.1" height="1.75" fill="#2f9db5"/>
<rect x="593.87" y="408.68" width="4.1" height="106.02" fill="#7c69b0"/>
<rect x="593.87" y="407.80" width="4.1" height="0.88" fill="#2f9db5"/>
<rect x="603.18" y="407.05" width="4.1" height="107.65" fill="#7c69b0"/>
<rect x="603.18" y="406.18" width="4.1" height="0.88" fill="#2f9db5"/>
<rect x="612.49" y="406.40" width="4.1" height="108.30" fill="#7c69b0"/>
<rect x="612.49" y="405.53" width="4.1" height="0.88" fill="#2f9db5"/>
<rect x="621.80" y="410.32" width="4.1" height="104.38" fill="#7c69b0"/>
<rect x="621.80" y="409.44" width="4.1" height="0.88" fill="#2f9db5"/>
<rect x="631.11" y="408.70" width="4.1" height="106.00" fill="#7c69b0"/>
<rect x="631.11" y="407.83" width="4.1" height="0.88" fill="#2f9db5"/>
<rect x="640.42" y="409.66" width="4.1" height="105.04" fill="#7c69b0"/>
<rect x="640.42" y="408.79" width="4.1" height="0.88" fill="#2f9db5"/>
<rect x="649.73" y="408.03" width="4.1" height="106.67" fill="#7c69b0"/>
<rect x="649.73" y="407.16" width="4.1" height="0.88" fill="#2f9db5"/>
<rect x="659.04" y="402.49" width="4.1" height="112.21" fill="#7c69b0"/>
<rect x="659.04" y="401.61" width="4.1" height="0.88" fill="#2f9db5"/>
<rect x="668.35" y="399.89" width="4.1" height="114.81" fill="#7c69b0"/>
<rect x="668.35" y="399.01" width="4.1" height="0.88" fill="#2f9db5"/>
<rect x="677.66" y="401.33" width="4.1" height="113.37" fill="#7c69b0"/>
<rect x="677.66" y="399.98" width="4.1" height="1.34" fill="#2f9db5"/>
<rect x="686.97" y="405.24" width="4.1" height="109.46" fill="#7c69b0"/>
<rect x="686.97" y="401.61" width="4.1" height="3.62" fill="#2f9db5"/>
<rect x="696.28" y="405.77" width="4.1" height="108.93" fill="#7c69b0"/>
<rect x="696.28" y="402.27" width="4.1" height="3.50" fill="#2f9db5"/>
<rect x="705.59" y="408.25" width="4.1" height="106.45" fill="#7c69b0"/>
<rect x="705.59" y="406.50" width="4.1" height="1.75" fill="#2f9db5"/>
<rect x="714.90" y="408.67" width="4.1" height="106.03" fill="#7c69b0"/>
<rect x="714.90" y="407.16" width="4.1" height="1.52" fill="#2f9db5"/>
<rect x="724.21" y="412.58" width="4.1" height="102.12" fill="#7c69b0"/>
<rect x="724.21" y="411.06" width="4.1" height="1.52" fill="#2f9db5"/>
<rect x="733.52" y="417.06" width="4.1" height="97.64" fill="#7c69b0"/>
<rect x="733.52" y="415.30" width="4.1" height="1.75" fill="#2f9db5"/>
<rect x="742.83" y="412.63" width="4.1" height="102.07" fill="#7c69b0"/>
<rect x="742.83" y="410.42" width="4.1" height="2.22" fill="#2f9db5"/>
<path d="M484.20 449.51C484.20 449.51 489.79 439.51 493.51 439.51C497.23 439.51 499.10 453.67 502.82 459.22C506.54 464.77 508.41 459.22 512.13 467.25C515.85 475.28 517.72 511.05 521.44 511.05C525.16 511.05 527.03 487.54 530.75 477.47C534.47 467.40 536.34 465.06 540.06 460.68C543.78 456.30 545.65 457.47 549.37 455.57C553.09 453.67 554.96 452.59 558.68 451.19C562.40 449.79 564.27 448.56 567.99 448.56C571.71 448.56 573.58 449.73 577.30 449.73C581.02 449.73 582.89 409.58 586.61 409.58C590.33 409.58 592.20 445.35 595.92 445.35C599.64 445.35 601.51 445.35 605.23 441.70C608.95 438.05 610.82 414.54 614.54 403.74C618.26 392.94 620.13 387.68 623.85 387.68C627.57 387.68 629.44 449.37 633.16 459.22C636.88 469.08 638.75 464.99 642.47 469.08C646.19 473.16 648.06 479.66 651.78 479.66C655.50 479.66 657.37 478.20 661.09 478.20C664.81 478.20 666.68 480.24 670.40 481.49C674.12 482.73 675.99 484.41 679.71 484.41C683.43 484.41 685.30 476.01 689.02 474.92C692.74 473.82 694.61 473.82 698.33 473.82C702.05 473.82 703.92 476.23 707.64 476.23C711.36 476.23 713.23 465.79 716.95 465.79C720.67 465.79 722.54 470.17 726.26 470.17C729.98 470.17 731.85 470.17 735.57 464.33C739.29 458.49 744.88 435.50 744.88 435.50" fill="none" stroke="#000" stroke-width="1.5" stroke-linejoin="round" stroke-linecap="round"/>
<text x="444.80" y="441.60" font-size="5.9" text-anchor="middle" transform="rotate(-90 444.80 441.60)" fill="#444">Cooling Use</text>
<text x="769.80" y="441.60" font-size="5.9" text-anchor="middle" transform="rotate(90 769.80 441.60)" fill="#444">Cooling Degree-Days (CDD)</text>
<circle cx="591.2" cy="539.4" r="2.3" fill="#2f9db5"/>
<circle cx="658.4" cy="539.4" r="2.3" fill="#7c69b0"/>
<path d="M722.0 539.4H729.8" stroke="#000" stroke-width="1.3" stroke-linecap="round"/>
</svg>
<span class="t" style="left:598.60px;top:538.00px;font-size:5.5px;line-height:5.5px;color:#333;font-weight:700;letter-spacing:0.065px;">Cooling (kBtu)</span>
<span class="t" style="left:666.00px;top:538.00px;font-size:5.5px;line-height:5.5px;color:#333;font-weight:700;letter-spacing:0.053px;">Electric (kBtu)</span>
<span class="t" style="left:732.40px;top:538.00px;font-size:5.5px;line-height:5.5px;color:#333;font-weight:700;letter-spacing:0.062px;">CDD (F-days)</span>
<div class="card" style="left:791.57px;top:348.20px;width:349.23px;height:211.80px;"></div>
<span class="t" style="left:796.27px;top:353.00px;font-size:7.6px;line-height:7.6px;color:#454545;font-weight:700;letter-spacing:-0.060px;">Electric Use vs. OAT</span>
<svg class="a" style="left:0px;top:0px" width="1166" height="552" viewBox="0 0 1166 552">
<path d="M1118.00 353.20H1124.40L1122.00 356.20V359.70L1120.40 358.80V356.20Z" fill="none" stroke="#b9b9b9" stroke-width="0.7" stroke-linejoin="round"/>
<circle cx="1133.10" cy="354.10" r="0.65" fill="#a8a8a8"/>
<circle cx="1133.10" cy="356.40" r="0.65" fill="#a8a8a8"/>
<circle cx="1133.10" cy="358.70" r="0.65" fill="#a8a8a8"/>
<path d="M1140.10 556.30V560.10H1136.50Z" fill="#b4b4b4"/>
</svg>
<svg class="a" style="left:0px;top:0px" width="1166" height="552" viewBox="0 0 1166 552">
<rect x="1125.20" y="371.40" width="8.6" height="1.3" rx="0.5" fill="#666"/>
<rect x="1125.20" y="374.00" width="8.6" height="1.3" rx="0.5" fill="#666"/>
<rect x="1125.20" y="376.60" width="8.6" height="1.3" rx="0.5" fill="#666"/>
<path d="M834.33 368.70H1108.23" stroke="#e6e6e6" stroke-width="0.6"/>
<text x="836.40" y="370.20" font-size="5.3" text-anchor="end" fill="#555">75,000</text>
<text x="1115.80" y="370.20" font-size="5.3" fill="#555">68</text>
<path d="M834.33 397.90H1108.23" stroke="#e6e6e6" stroke-width="0.6"/>
<text x="836.40" y="399.40" font-size="5.3" text-anchor="end" fill="#555">60,000</text>
<text x="1115.80" y="399.40" font-size="5.3" fill="#555">64</text>
<path d="M834.33 427.10H1108.23" stroke="#e6e6e6" stroke-width="0.6"/>
<text x="836.40" y="428.60" font-size="5.3" text-anchor="end" fill="#555">45,000</text>
<text x="1115.80" y="428.60" font-size="5.3" fill="#555">60</text>
<path d="M834.33 456.30H1108.23" stroke="#e6e6e6" stroke-width="0.6"/>
<text x="836.40" y="457.80" font-size="5.3" text-anchor="end" fill="#555">30,000</text>
<text x="1115.80" y="457.80" font-size="5.3" fill="#555">56</text>
<path d="M834.33 485.50H1108.23" stroke="#e6e6e6" stroke-width="0.6"/>
<text x="836.40" y="487.00" font-size="5.3" text-anchor="end" fill="#555">15,000</text>
<text x="1115.80" y="487.00" font-size="5.3" fill="#555">52</text>
<path d="M834.33 514.70H1108.23" stroke="#e6e6e6" stroke-width="0.6"/>
<text x="836.40" y="516.20" font-size="5.3" text-anchor="end" fill="#555">0</text>
<text x="1115.80" y="516.20" font-size="5.3" fill="#555">48</text>
<path d="M850.73 368.7V514.7" stroke="#f0f0f0" stroke-width="0.6"/>
<text x="850.73" y="525.40" font-size="5.1" text-anchor="middle" fill="#555">1/6/2025</text>
<path d="M913.24 368.7V514.7" stroke="#f0f0f0" stroke-width="0.6"/>
<text x="913.24" y="525.40" font-size="5.1" text-anchor="middle" fill="#555">1/13/2025</text>
<path d="M975.75 368.7V514.7" stroke="#f0f0f0" stroke-width="0.6"/>
<text x="975.75" y="525.40" font-size="5.1" text-anchor="middle" fill="#555">1/20/2025</text>
<path d="M1038.26 368.7V514.7" stroke="#f0f0f0" stroke-width="0.6"/>
<text x="1038.26" y="525.40" font-size="5.1" text-anchor="middle" fill="#555">1/27/2025</text>
<path d="M1100.77 368.7V514.7" stroke="#f0f0f0" stroke-width="0.6"/>
<text x="1100.77" y="525.40" font-size="5.1" text-anchor="middle" fill="#555">2/3/2025</text>
<rect x="839.85" y="474.61" width="3.9" height="40.09" fill="#7c69b0"/>
<rect x="848.78" y="434.21" width="3.9" height="80.49" fill="#7c69b0"/>
<rect x="857.71" y="411.07" width="3.9" height="103.63" fill="#7c69b0"/>
<rect x="866.64" y="452.78" width="3.9" height="61.92" fill="#7c69b0"/>
<rect x="875.57" y="411.07" width="3.9" height="103.63" fill="#7c69b0"/>
<rect x="884.50" y="426.38" width="3.9" height="88.32" fill="#7c69b0"/>
<rect x="893.43" y="434.21" width="3.9" height="80.49" fill="#7c69b0"/>
<rect x="902.36" y="433.23" width="3.9" height="81.47" fill="#7c69b0"/>
<rect x="911.29" y="440.07" width="3.9" height="74.63" fill="#7c69b0"/>
<rect x="920.22" y="434.21" width="3.9" height="80.49" fill="#7c69b0"/>
<rect x="929.15" y="417.91" width="3.9" height="96.79" fill="#7c69b0"/>
<rect x="938.08" y="427.04" width="3.9" height="87.66" fill="#7c69b0"/>
<rect x="947.01" y="425.41" width="3.9" height="89.29" fill="#7c69b0"/>
<rect x="955.94" y="408.79" width="3.9" height="105.91" fill="#7c69b0"/>
<rect x="964.87" y="407.15" width="3.9" height="107.55" fill="#7c69b0"/>
<rect x="973.80" y="407.81" width="3.9" height="106.89" fill="#7c69b0"/>
<rect x="982.73" y="409.44" width="3.9" height="105.26" fill="#7c69b0"/>
<rect x="991.66" y="409.76" width="3.9" height="104.94" fill="#7c69b0"/>
<rect x="1000.59" y="410.42" width="3.9" height="104.28" fill="#7c69b0"/>
<rect x="1009.52" y="408.13" width="3.9" height="106.57" fill="#7c69b0"/>
<rect x="1018.45" y="403.25" width="3.9" height="111.45" fill="#7c69b0"/>
<rect x="1027.38" y="400.96" width="3.9" height="113.74" fill="#7c69b0"/>
<rect x="1036.31" y="402.27" width="3.9" height="112.43" fill="#7c69b0"/>
<rect x="1045.24" y="405.85" width="3.9" height="108.85" fill="#7c69b0"/>
<rect x="1054.17" y="405.85" width="3.9" height="108.85" fill="#7c69b0"/>
<rect x="1063.10" y="409.11" width="3.9" height="105.59" fill="#7c69b0"/>
<rect x="1072.03" y="408.79" width="3.9" height="105.91" fill="#7c69b0"/>
<rect x="1080.96" y="413.67" width="3.9" height="101.03" fill="#7c69b0"/>
<rect x="1089.89" y="418.56" width="3.9" height="96.14" fill="#7c69b0"/>
<rect x="1098.82" y="414.00" width="3.9" height="100.70" fill="#7c69b0"/>
<path d="M841.80 413.23C841.80 413.23 847.16 441.70 850.73 443.89C854.30 446.08 856.09 443.89 859.66 446.08C863.23 448.27 865.02 454.11 868.59 457.03C872.16 459.95 873.95 460.68 877.52 460.68C881.09 460.68 882.88 460.39 886.45 457.03C890.02 453.67 891.81 443.89 895.38 443.89C898.95 443.89 900.74 452.65 904.31 452.65C907.88 452.65 909.67 446.81 913.24 445.35C916.81 443.89 918.60 445.35 922.17 443.89C925.74 442.43 927.53 430.02 931.10 424.91C934.67 419.80 936.46 420.82 940.03 418.34C943.60 415.86 945.39 412.50 948.96 412.50C952.53 412.50 954.32 412.50 957.89 415.42C961.46 418.34 963.25 432.94 966.82 441.70C970.39 450.46 972.18 453.96 975.75 459.22C979.32 464.48 981.11 467.98 984.68 467.98C988.25 467.98 990.04 449.00 993.61 449.00C997.18 449.00 998.97 449.00 1002.54 451.92C1006.11 454.84 1007.90 471.63 1011.47 473.82C1015.04 476.01 1016.83 476.01 1020.40 476.01C1023.97 476.01 1025.76 458.49 1029.33 458.49C1032.90 458.49 1034.69 458.56 1038.26 460.68C1041.83 462.80 1043.62 469.08 1047.19 469.08C1050.76 469.08 1052.55 469.08 1056.12 469.08C1059.69 469.08 1061.48 469.08 1065.05 467.25C1068.62 465.42 1070.41 411.41 1073.98 411.41C1077.55 411.41 1079.34 411.41 1082.91 416.88C1086.48 422.35 1088.27 434.98 1091.84 441.70C1095.41 448.42 1100.77 450.46 1100.77 450.46" fill="none" stroke="#000" stroke-width="1.5" stroke-linejoin="round" stroke-linecap="round"/>
<text x="802.80" y="441.60" font-size="5.9" text-anchor="middle" transform="rotate(-90 802.80 441.60)" fill="#444">Energy Use</text>
<text x="1127.80" y="441.60" font-size="5.9" text-anchor="middle" transform="rotate(90 1127.80 441.60)" fill="#444">Outside Air Temperature</text>
<circle cx="1035.0" cy="539.4" r="2.3" fill="#7c69b0"/>
</svg>
<span class="t" style="left:1042.00px;top:538.00px;font-size:5.5px;line-height:5.5px;color:#333;font-weight:700;letter-spacing:0.053px;">Electric (kBtu)</span>
<div class="" style="left:1096.40px;top:536.10px;width:49.80px;height:16.00px;background:#222;"></div>
<span class="t" style="left:1101.80px;top:543.00px;font-size:7.0px;line-height:7.0px;color:#fff;letter-spacing:-0.046px;">English</span>
<svg class="a" style="left:1096px;top:536px" width="60" height="16" viewBox="1096 536 60 16">
<path d="M1137.4 543.0L1140.0 545.4L1137.4 547.8" fill="none" stroke="#fff" stroke-width="1.25"/>
</svg>
</div></body></html>
